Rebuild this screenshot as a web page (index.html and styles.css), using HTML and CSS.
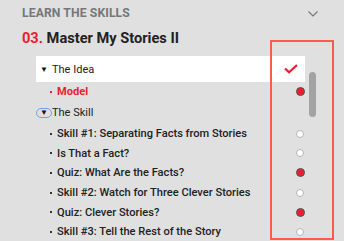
FILE: index.html
```html
<!DOCTYPE html>
<html>
<head>
<meta charset="utf-8">
<link rel="stylesheet" href="styles.css">
</head>
<body>
<div class="panel">
  <div class="head">
    <span class="kicker">LEARN THE SKILLS</span>
    <svg class="chev" width="10" height="6" viewBox="0 0 10 6"><polyline points="0.5,0.5 5,5 9.5,0.5" fill="none" stroke="#777" stroke-width="1.2"/></svg>
  </div>
  <h1 class="title"><span class="num">03.</span> Master My Stories II</h1>
  <div class="outline">
    <div class="row idea">
      <span class="tri">&#9660;</span><span class="label">The Idea</span>
      <svg class="check" width="14" height="10" viewBox="0 0 14 10"><polyline points="1,4.5 5,8.2 13,1" fill="none" stroke="#ee1c2e" stroke-width="2.2"/></svg>
    </div>
    <ul class="items">
      <li class="item current"><span class="bullet"></span><span class="text">Model</span><span class="dot red"></span></li>
    </ul>
    <div class="row skill">
      <button class="toggle">&#9660;</button><span class="label">The Skill</span>
    </div>
    <ul class="items">
      <li class="item"><span class="bullet"></span><span class="text">Skill #1: Separating Facts from Stories</span><span class="dot"></span></li>
      <li class="item"><span class="bullet"></span><span class="text">Is That a Fact?</span><span class="dot"></span></li>
      <li class="item"><span class="bullet"></span><span class="text">Quiz: What Are the Facts?</span><span class="dot red"></span></li>
      <li class="item"><span class="bullet"></span><span class="text">Skill #2: Watch for Three Clever Stories</span><span class="dot"></span></li>
      <li class="item"><span class="bullet"></span><span class="text">Quiz: Clever Stories?</span><span class="dot red"></span></li>
      <li class="item"><span class="bullet"></span><span class="text">Skill #3: Tell the Rest of the Story</span><span class="dot"></span></li>
    </ul>
  </div>
  <div class="scrollbar"></div>
  <div class="highlight"></div>
</div>
</body>
</html>
```

FILE: styles.css
```css
html, body {
  margin: 0;
  padding: 0;
  background: #e0e0e0;
}
body {
  width: 344px;
  height: 241px;
  overflow: hidden;
  font-family: Roboto, "Liberation Sans", sans-serif;
}
.panel {
  position: relative;
  width: 344px;
  height: 241px;
}
.head {
  display: flex;
  align-items: center;
  justify-content: space-between;
  padding: 6px 26px 0 22px;
  height: 14px;
}
.kicker {
  font-size: 12.2px;
  font-weight: 700;
  color: #777;
  letter-spacing: 0.1px;
}
.chev {
  display: block;
  margin-top: 2px;
}
.title {
  margin: 9px 0 0 22px;
  font-size: 14.6px;
  font-weight: 700;
  color: #222;
  line-height: 18px;
}
.num {
  color: #ee1c2e;
}
.outline {
  margin: 9px 0 0 36px;
  width: 269px;
}
.row {
  display: flex;
  align-items: center;
  font-size: 11px;
  color: #222;
}
.idea {
  background: #fff;
  height: 26px;
}
.tri {
  font-size: 8px;
  width: 8px;
  margin-left: 4px;
  margin-right: 4px;
  color: #111;
}
.check {
  display: block;
  margin-left: auto;
  margin-right: 7px;
}
.skill {
  height: 23px;
}
.toggle {
  font-family: inherit;
  font-size: 8px;
  color: #111;
  width: 16px;
  height: 10px;
  padding: 0;
  margin: 0;
  border: 1.5px solid #6fa0f0;
  border-radius: 5px;
  background: #e0e0e0;
  line-height: 7px;
  display: flex;
  align-items: center;
  justify-content: center;
}
.items {
  list-style: none;
  margin: 0;
  padding: 0;
}
.item {
  display: flex;
  align-items: center;
  height: 19.6px;
  font-size: 11.1px;
  font-weight: 500;
  color: #222;
}
.current {
  height: 19px;
  color: #ee1c2e;
  font-weight: 700;
}
.bullet {
  width: 2px;
  height: 2px;
  background: #333;
  margin-left: 14px;
  margin-right: 5px;
}
.current .bullet {
  background: #ee1c2e;
}
.dot {
  margin-left: auto;
  margin-right: 1px;
  width: 6px;
  height: 6px;
  border-radius: 50%;
  background: #fff;
  border: 1px solid #b4b4b4;
}
.dot.red {
  width: 7px;
  height: 7px;
  background: #ee1c2e;
  border: 1px solid #555;
  margin-right: 0;
}
.scrollbar {
  position: absolute;
  left: 309px;
  top: 72px;
  width: 7px;
  height: 45px;
  border-radius: 4px;
  background: #a3a3a3;
}
.highlight {
  position: absolute;
  left: 270px;
  top: 40px;
  width: 60px;
  height: 196px;
  border: 2px solid #ff5a4d;
}
```
